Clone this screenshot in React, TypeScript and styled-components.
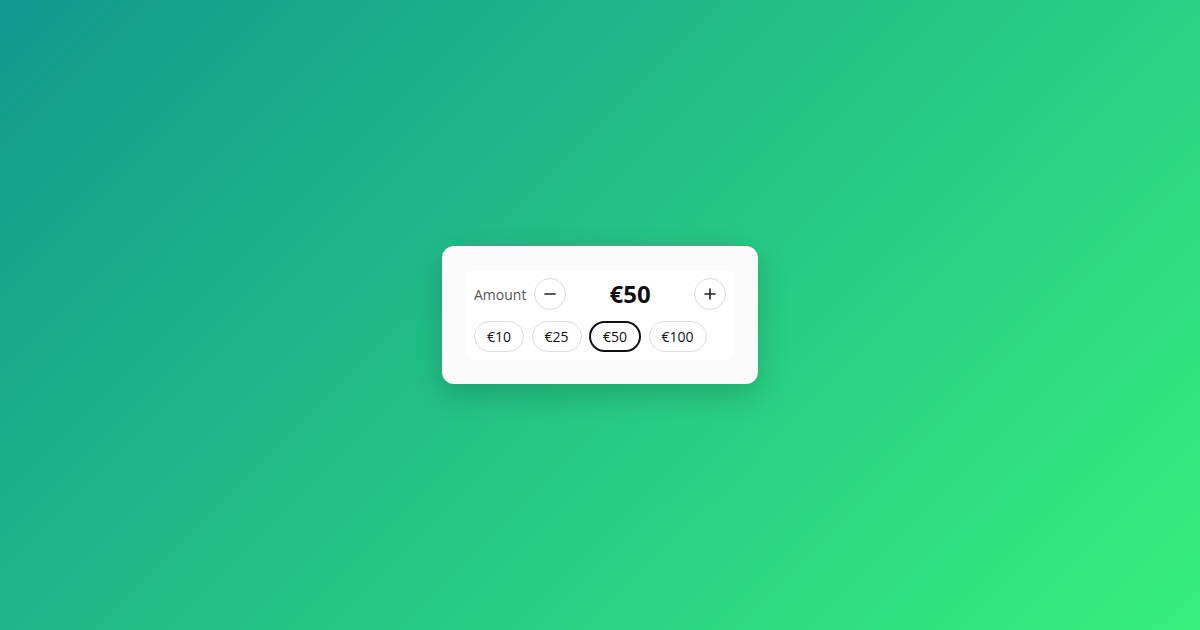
import React, { useState } from "react";
import styled, { createGlobalStyle } from "styled-components";

const Global = createGlobalStyle`
  html, body { margin: 0; padding: 0; }
  body { font-family: "Open Sans", "Liberation Sans", sans-serif; }
  #root { height: 630px; }
`;

const Page = styled.div`
  height: 630px;
  width: 100%;
  background: linear-gradient(135deg, #11998e 0%, #38ef7d 100%);
  display: flex;
  align-items: center;
  justify-content: center;
`;

const Card = styled.div`
  background: #fafafa;
  border-radius: 12px;
  padding: 24px;
  box-shadow: 0 10px 30px rgba(0, 0, 0, 0.18);
  width: 268px;
`;

const Panel = styled.div`
  background: #ffffff;
  border-radius: 8px;
  padding: 8px;
  display: flex;
  flex-direction: column;
  gap: 11px;
`;

const TopRow = styled.div`
  display: flex;
  align-items: center;
  gap: 8px;
`;

const Label = styled.span`
  font-size: 14px;
  color: #555;
`;

const RoundButton = styled.button`
  width: 32px;
  height: 32px;
  border-radius: 50%;
  border: 1px solid #ddd;
  background: #fff;
  padding: 0;
  display: flex;
  align-items: center;
  justify-content: center;
  color: #222;
  cursor: pointer;
`;

const Value = styled.div`
  flex: 1;
  text-align: center;
  font-size: 24px;
  line-height: 30px;
  font-weight: 700;
  color: #111;
`;

const Chips = styled.div`
  display: flex;
  gap: 7.5px;
`;

const Chip = styled.button<{ $active: boolean }>`
  font-family: "Open Sans", "Liberation Sans", sans-serif;
  font-size: 14px;
  line-height: 18px;
  height: 31px;
  padding: 0 12px;
  border-radius: 16px;
  background: #fff;
  color: #111;
  border: ${(p) => (p.$active ? "2px solid #111" : "1px solid #ddd")};
  cursor: pointer;
`;

const Minus = () => (
  <svg width="14" height="14" viewBox="0 0 14 14" fill="none">
    <path d="M2 7h10" stroke="currentColor" strokeWidth="1.6" strokeLinecap="round" />
  </svg>
);

const Plus = () => (
  <svg width="14" height="14" viewBox="0 0 14 14" fill="none">
    <path d="M2 7h10M7 2v10" stroke="currentColor" strokeWidth="1.6" strokeLinecap="round" />
  </svg>
);

const presets = [10, 25, 50, 100];

export default function App() {
  const [amount, setAmount] = useState(50);
  return (
    <>
      <Global />
      <Page>
        <Card>
          <Panel>
            <TopRow>
              <Label>Amount</Label>
              <RoundButton aria-label="decrease" onClick={() => setAmount((a) => Math.max(0, a - 5))}>
                <Minus />
              </RoundButton>
              <Value>€{amount}</Value>
              <RoundButton aria-label="increase" onClick={() => setAmount((a) => a + 5)}>
                <Plus />
              </RoundButton>
            </TopRow>
            <Chips>
              {presets.map((p) => (
                <Chip key={p} $active={p === amount} onClick={() => setAmount(p)}>
                  €{p}
                </Chip>
              ))}
            </Chips>
          </Panel>
        </Card>
      </Page>
    </>
  );
}
